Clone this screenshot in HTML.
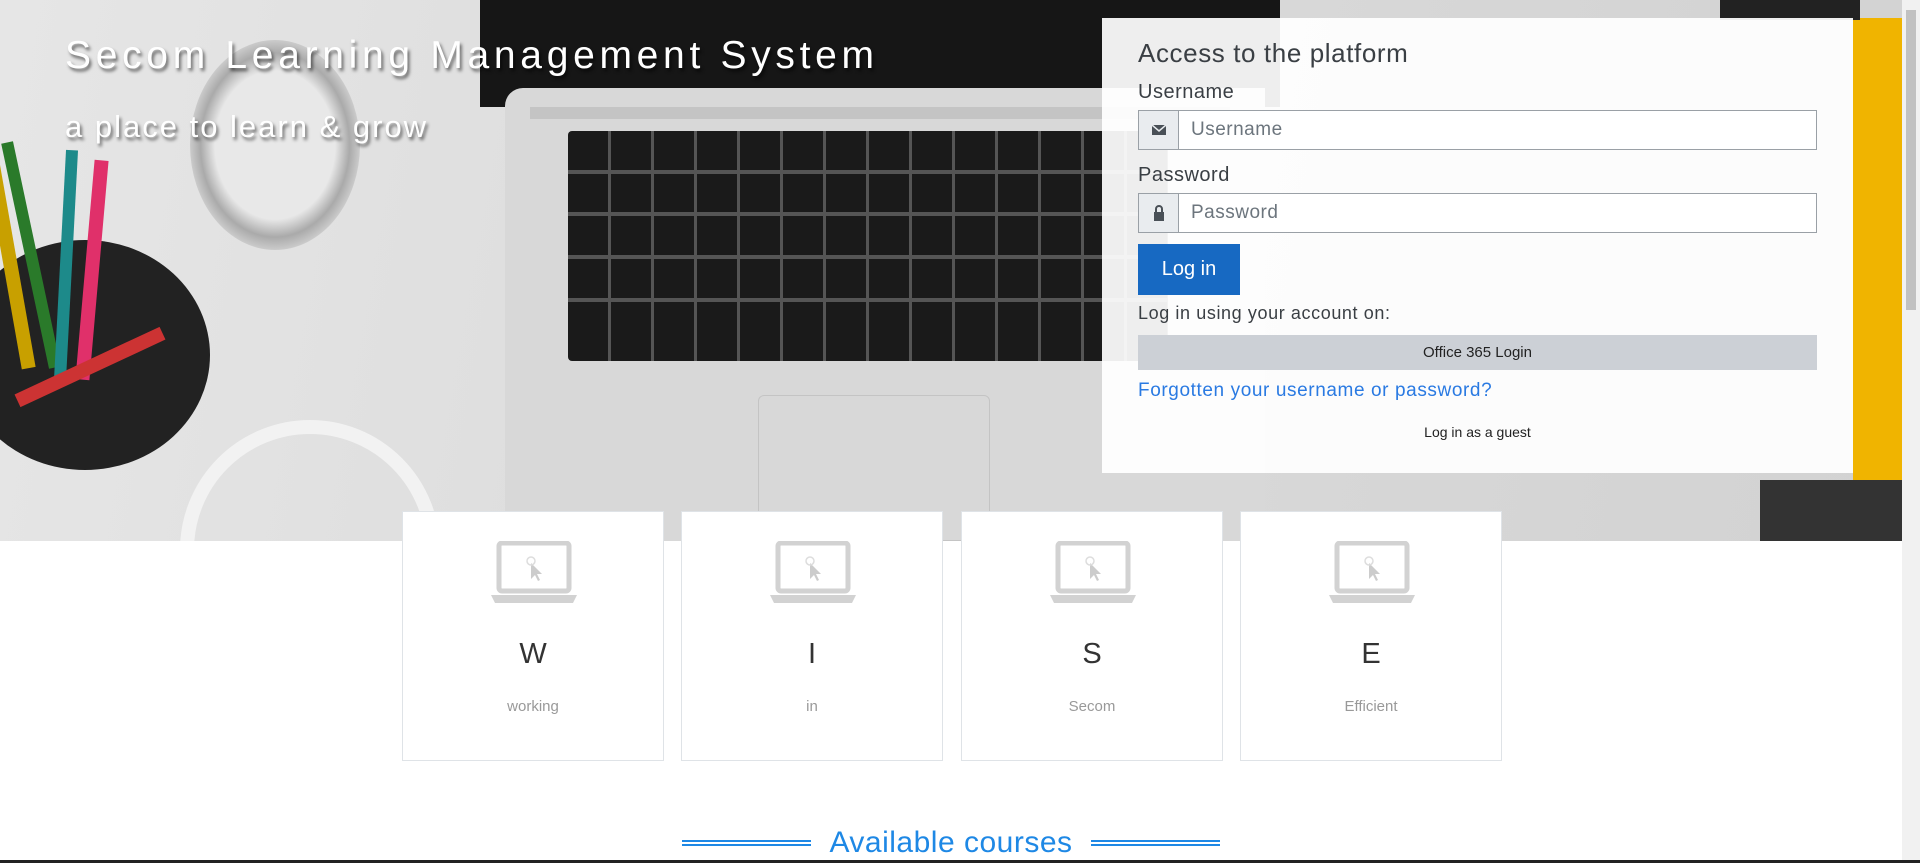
<!DOCTYPE html>
<html><head><meta charset="utf-8">
<style>
*{box-sizing:border-box;margin:0;padding:0}
body{width:1920px;height:863px;overflow:hidden;background:#fff;font-family:"Liberation Sans",sans-serif;position:relative}
.hero{position:absolute;left:0;top:0;width:1902px;height:541px;background:linear-gradient(100deg,#e6e6e6 0%,#dcdcdc 40%,#d2d2d2 100%);overflow:hidden}
.abs{position:absolute}
.key{background:repeating-linear-gradient(90deg,#1a1a1a 0 40px,#555 40px 43px),#1a1a1a}
.panel{position:absolute;left:1102px;top:18px;width:751px;height:455px;background:rgba(255,255,255,.93)}
.panel h2{position:absolute;left:36px;top:20px;font-weight:normal;font-size:26px;color:#3a3f44;letter-spacing:.6px}
.lbl{position:absolute;left:36px;font-size:20px;color:#3a3f44;letter-spacing:.5px}
.inp{position:absolute;left:36px;width:679px;height:40px;border:1px solid #9aa0a6;background:#fff}
.inp .ad{position:absolute;left:0;top:0;width:40px;height:38px;background:#e9ecef;border-right:1px solid #9aa0a6}
.inp span.ph{position:absolute;left:52px;top:8px;font-size:19px;color:#6c757d;letter-spacing:.5px}
.btn{position:absolute;left:36px;top:226px;width:102px;height:51px;background:#1769c2;color:#fff;font-size:20px;text-align:center;line-height:51px}
.card{position:absolute;top:511px;width:262px;height:250px;border:1px solid #dfe3e7;background:#fff;text-align:center}
.card .L{position:absolute;top:126px;width:100%;font-size:29px;color:#333}
.card .s{position:absolute;top:186px;width:100%;font-size:15px;color:#999}
.card svg{position:absolute;left:86px;top:29px}
</style></head><body>
<div class="hero">
  <div class="abs" style="left:480px;top:0;width:800px;height:107px;background:#161616"></div>
  <div class="abs" style="left:505px;top:88px;width:760px;height:453px;background:#d8d8d8;border-radius:18px 0 0 0"></div>
  <div class="abs" style="left:530px;top:107px;width:700px;height:12px;background:#c4c4c4"></div>
  <div class="abs key" style="left:568px;top:131px;width:600px;height:230px;border-radius:4px"></div>
  <div class="abs" style="left:568px;top:170px;width:600px;height:4px;background:#555"></div>
  <div class="abs" style="left:568px;top:212px;width:600px;height:4px;background:#555"></div>
  <div class="abs" style="left:568px;top:255px;width:600px;height:4px;background:#555"></div>
  <div class="abs" style="left:568px;top:298px;width:600px;height:4px;background:#555"></div>
  <div class="abs" style="left:758px;top:395px;width:232px;height:146px;border:1px solid #c4c4c4;border-radius:6px"></div>
  <div class="abs" style="left:190px;top:40px;width:170px;height:210px;border-radius:50%;background:radial-gradient(ellipse,#e8e8e8 50%,#aaa 62%,#d0d0d0 72%,transparent 74%)"></div>
  <div class="abs" style="left:-40px;top:240px;width:250px;height:230px;border-radius:50%;background:#222"></div>
  <div class="abs" style="left:0;top:120px;width:14px;height:250px;background:#c8a000;transform:rotate(-10deg)"></div>
  <div class="abs" style="left:25px;top:140px;width:12px;height:230px;background:#2a7a2a;transform:rotate(-12deg)"></div>
  <div class="abs" style="left:60px;top:150px;width:12px;height:230px;background:#1d8a8a;transform:rotate(3deg)"></div>
  <div class="abs" style="left:85px;top:160px;width:14px;height:220px;background:#e0306a;transform:rotate(5deg)"></div>
  <div class="abs" style="left:10px;top:360px;width:160px;height:14px;background:#c33;transform:rotate(-25deg)"></div>
  <div class="abs" style="left:180px;top:420px;width:260px;height:260px;border-radius:50%;border:14px solid #f2f2f2"></div>
  <div class="abs" style="left:1853px;top:18px;width:49px;height:480px;background:#f0b400"></div>
  <div class="abs" style="left:1720px;top:0;width:140px;height:20px;background:#222"></div>
  <div class="abs" style="left:1760px;top:480px;width:142px;height:61px;background:#333"></div>
  <div class="abs" style="left:65px;top:34px;font-size:39px;color:#fff;letter-spacing:4.7px;text-shadow:2px 3px 3px rgba(0,0,0,.55)">Secom Learning Management System</div>
  <div class="abs" style="left:65px;top:109px;font-size:31px;color:#fff;letter-spacing:2px;text-shadow:2px 3px 3px rgba(0,0,0,.55)">a place to learn &amp; grow</div>
</div>
<div class="abs" style="left:1902px;top:0;width:18px;height:863px;background:#f1f1f1"></div>
<div class="abs" style="left:1906px;top:10px;width:10px;height:300px;background:#c1c1c1"></div>
<div class="panel">
  <h2>Access to the platform</h2>
  <div class="lbl" style="top:63px">Username</div>
  <div class="inp" style="top:92px"><div class="ad"><svg width="40" height="38"><rect x="13" y="14" width="14" height="10" fill="#495057"/><path d="M13 14l7 6 7-6" stroke="#e9ecef" stroke-width="1.5" fill="none"/></svg></div><span class="ph">Username</span></div>
  <div class="lbl" style="top:146px">Password</div>
  <div class="inp" style="top:175px"><div class="ad"><svg width="40" height="38"><rect x="15" y="18" width="10" height="9" fill="#495057"/><path d="M17 18v-3a3 3 0 0 1 6 0v3" stroke="#495057" stroke-width="2" fill="none"/></svg></div><span class="ph">Password</span></div>
  <div class="btn">Log in</div>
  <div class="lbl" style="top:285px;font-size:18px;letter-spacing:.6px">Log in using your account on:</div>
  <div class="abs" style="left:36px;top:317px;width:679px;height:35px;background:#ccd0d6;text-align:center;line-height:35px;font-size:15px;color:#222">Office 365 Login</div>
  <div class="abs" style="left:36px;top:362px;font-size:19px;color:#2a7ae2;letter-spacing:.6px">Forgotten your username or password?</div>
  <div class="abs" style="left:36px;top:406px;width:679px;text-align:center;font-size:14px;color:#222">Log in as a guest</div>
</div>
<div class="card" style="left:402px"><svg width="90" height="64" viewBox="0 0 90 64"><rect x="10" y="2" width="70" height="48" rx="3" fill="none" stroke="#d2d2d2" stroke-width="5"/><path d="M2 54h86l-4 8H6z" fill="#d2d2d2"/><path d="M42 22l0 16 4-4 3 6 2-1-3-6 5 0z" fill="#ccc"/><circle cx="42" cy="20" r="4" fill="none" stroke="#ddd" stroke-width="1.5"/></svg><div class="L">W</div><div class="s">working</div></div>
<div class="card" style="left:681px"><svg width="90" height="64" viewBox="0 0 90 64"><rect x="10" y="2" width="70" height="48" rx="3" fill="none" stroke="#d2d2d2" stroke-width="5"/><path d="M2 54h86l-4 8H6z" fill="#d2d2d2"/><path d="M42 22l0 16 4-4 3 6 2-1-3-6 5 0z" fill="#ccc"/><circle cx="42" cy="20" r="4" fill="none" stroke="#ddd" stroke-width="1.5"/></svg><div class="L">I</div><div class="s">in</div></div>
<div class="card" style="left:961px"><svg width="90" height="64" viewBox="0 0 90 64"><rect x="10" y="2" width="70" height="48" rx="3" fill="none" stroke="#d2d2d2" stroke-width="5"/><path d="M2 54h86l-4 8H6z" fill="#d2d2d2"/><path d="M42 22l0 16 4-4 3 6 2-1-3-6 5 0z" fill="#ccc"/><circle cx="42" cy="20" r="4" fill="none" stroke="#ddd" stroke-width="1.5"/></svg><div class="L">S</div><div class="s">Secom</div></div>
<div class="card" style="left:1240px"><svg width="90" height="64" viewBox="0 0 90 64"><rect x="10" y="2" width="70" height="48" rx="3" fill="none" stroke="#d2d2d2" stroke-width="5"/><path d="M2 54h86l-4 8H6z" fill="#d2d2d2"/><path d="M42 22l0 16 4-4 3 6 2-1-3-6 5 0z" fill="#ccc"/><circle cx="42" cy="20" r="4" fill="none" stroke="#ddd" stroke-width="1.5"/></svg><div class="L">E</div><div class="s">Efficient</div></div>
<div class="abs" style="left:682px;top:840px;width:129px;height:6px;border-top:2px solid #1e88e5;border-bottom:2px solid #1e88e5"></div>
<div class="abs" style="left:1091px;top:840px;width:129px;height:6px;border-top:2px solid #1e88e5;border-bottom:2px solid #1e88e5"></div>
<div class="abs" style="left:811px;top:826px;width:280px;text-align:center;font-size:30px;color:#1e88e5;letter-spacing:.5px">Available courses</div>
<div class="abs" style="left:0;top:860px;width:1920px;height:3px;background:#222"></div>
</body></html>
